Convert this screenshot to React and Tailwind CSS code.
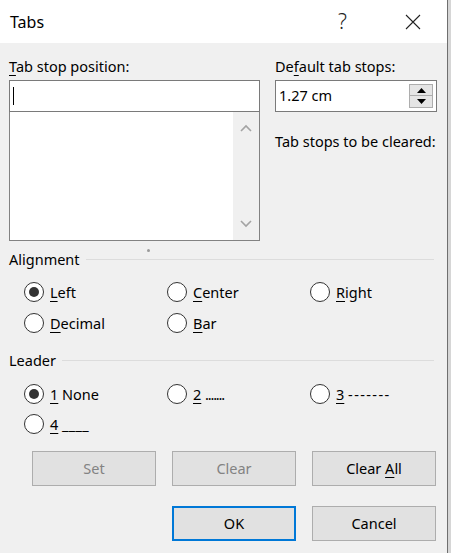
import React from "react";

const font = { fontFamily: '"Noto Sans", "Open Sans", sans-serif' };

function Radio({ checked, children }) {
  return (
    <div className="flex items-center gap-[6px]">
      <div className="w-[20px] h-[20px] rounded-full border border-[#333333] bg-white flex items-center justify-center">
        {checked && <div className="w-[10px] h-[10px] rounded-full bg-[#333333]" />}
      </div>
      <span className="text-[14.5px] leading-[20px] text-black whitespace-pre">{children}</span>
    </div>
  );
}

function U({ children }) {
  return <span className="underline underline-offset-[3px]">{children}</span>;
}

function Btn({ children, disabled, primary }) {
  return (
    <div
      className={
        "w-[124px] h-[35px] flex items-center justify-center bg-[#e1e1e1] text-[14.5px] " +
        (primary ? "border-2 border-[#0078d7] " : "border border-[#adadad] ") +
        (disabled ? "text-[#838383]" : "text-black")
      }
    >
      <span className="whitespace-pre">{children}</span>
    </div>
  );
}

function GroupLabel({ children }) {
  return (
    <div className="flex items-center gap-[6px] pr-[13px]">
      <span className="text-[14.5px] leading-[20px] text-black">{children}</span>
      <div className="flex-1 h-px bg-[#dcdcdc]" />
    </div>
  );
}

export default function App() {
  return (
    <div className="w-[451px] h-[553px] flex bg-[#f0f0f0] overflow-hidden" style={font}>
      <div className="w-[447px] h-full flex flex-col">
        {/* Title bar */}
        <div className="h-[43px] bg-white flex items-center">
          <span className="pl-[10px] text-[16px] text-black flex-1">Tabs</span>
          <span className="text-[21px] font-light text-[#222] mr-[58px] leading-none">?</span>
          <svg width="16" height="16" viewBox="0 0 16 16" className="mr-[26px]">
            <path d="M1 1 L15 15 M15 1 L1 15" stroke="#222" strokeWidth="1.1" />
          </svg>
        </div>

        {/* Body */}
        <div className="relative flex-1 pl-[9px]">
          <div className="flex gap-[15px] mt-[13px]">
            {/* Left column */}
            <div className="w-[251px] flex flex-col">
              <div className="text-[14.5px] leading-[20px] text-black">
                <U>T</U>ab stop position:
              </div>
              <div className="mt-[4px] h-[32px] bg-white border border-[#7a7a7a] flex items-center pl-[3px]">
                <div className="w-px h-[18px] bg-black" />
              </div>
              <div className="h-[129px] bg-white border border-[#828282] border-t-0 flex justify-end">
                <div className="w-[26px] h-full bg-[#f0f0f0] flex flex-col items-center justify-between py-[12px]">
                  <svg width="12" height="8" viewBox="0 0 12 8">
                    <path d="M1 7 L6 2 L11 7" stroke="#a3a3a3" strokeWidth="1.6" fill="none" />
                  </svg>
                  <svg width="12" height="8" viewBox="0 0 12 8">
                    <path d="M1 1 L6 6 L11 1" stroke="#a3a3a3" strokeWidth="1.6" fill="none" />
                  </svg>
                </div>
              </div>
            </div>
            {/* Right column */}
            <div className="w-[162px] flex flex-col">
              <div className="text-[14.5px] leading-[20px] text-black">
                De<U>f</U>ault tab stops:
              </div>
              <div className="mt-[4px] h-[32px] bg-white border border-[#7a7a7a] flex items-center pl-[3px] pr-[3px]">
                <span className="flex-1 text-[14.5px] text-black">1.27 cm</span>
                <div className="flex flex-col">
                  <div className="w-[24px] h-[12px] bg-[#e5e5e5] border border-[#adadad] flex items-center justify-center">
                    <svg width="9" height="5" viewBox="0 0 9 5"><path d="M0 5 L4.5 0 L9 5 Z" fill="#000" /></svg>
                  </div>
                  <div className="w-[24px] h-[12px] bg-[#e5e5e5] border border-[#adadad] border-t-0 flex items-center justify-center">
                    <svg width="9" height="5" viewBox="0 0 9 5"><path d="M0 0 L4.5 5 L9 0 Z" fill="#000" /></svg>
                  </div>
                </div>
              </div>
              <div className="mt-[19px] text-[14.5px] leading-[20px] text-black whitespace-nowrap">
                Tab stops to be cleared:
              </div>
            </div>
          </div>

          <div className="absolute left-[147px] top-[206px] w-[3px] h-[3px] rounded-full bg-[#9a9a9a]" />

          <div className="mt-[8px]">
            <GroupLabel>Alignment</GroupLabel>
          </div>
          <div className="mt-[13px] pl-[15px] grid grid-cols-[143px_143px_143px] gap-y-[11px]">
            <Radio checked><U>L</U>eft</Radio>
            <Radio><U>C</U>enter</Radio>
            <Radio><U>R</U>ight</Radio>
            <Radio><U>D</U>ecimal</Radio>
            <Radio><U>B</U>ar</Radio>
          </div>

          <div className="mt-[17px]">
            <GroupLabel>Leader</GroupLabel>
          </div>
          <div className="mt-[14px] pl-[15px] grid grid-cols-[143px_143px_143px] gap-y-[10px]">
            <Radio checked><U>1</U> None</Radio>
            <Radio><U>2</U> <span className="tracking-[-1.2px]">.......</span></Radio>
            <Radio><U>3</U> <span className="tracking-[1.4px]">-------</span></Radio>
            <Radio><U>4</U> <span className="tracking-[0.3px]">____</span></Radio>
          </div>

          <div className="mt-[17px] pl-[23px] flex gap-[16px]">
            <Btn disabled>Set</Btn>
            <Btn disabled>Clear</Btn>
            <Btn>Clear <U>A</U>ll</Btn>
          </div>
          <div className="mt-[20px] pl-[163px] flex gap-[16px]">
            <Btn primary>OK</Btn>
            <Btn>Cancel</Btn>
          </div>
        </div>
      </div>
      <div className="w-px h-full bg-[#6f6f6f]" />
      <div className="w-[3px] h-full bg-[#d6d6d6]" />
    </div>
  );
}
